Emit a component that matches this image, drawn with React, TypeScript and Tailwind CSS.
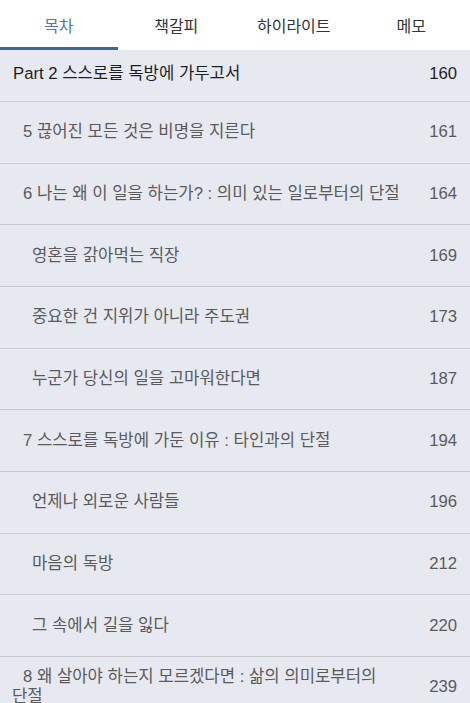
import React from 'react';

type Item = { title: string; page: number; level: 1 | 2 | 3 };

const tabs = ['목차', '책갈피', '하이라이트', '메모'];

const items: Item[] = [
  { title: 'Part 2 스스로를 독방에 가두고서', page: 160, level: 1 },
  { title: '5 끊어진 모든 것은 비명을 지른다', page: 161, level: 2 },
  { title: '6 나는 왜 이 일을 하는가? : 의미 있는 일로부터의 단절', page: 164, level: 2 },
  { title: '영혼을 갉아먹는 직장', page: 169, level: 3 },
  { title: '중요한 건 지위가 아니라 주도권', page: 173, level: 3 },
  { title: '누군가 당신의 일을 고마워한다면', page: 187, level: 3 },
  { title: '7 스스로를 독방에 가둔 이유 : 타인과의 단절', page: 194, level: 2 },
  { title: '언제나 외로운 사람들', page: 196, level: 3 },
  { title: '마음의 독방', page: 212, level: 3 },
  { title: '그 속에서 길을 잃다', page: 220, level: 3 },
  { title: '8 왜 살아야 하는지 모르겠다면 : 삶의 의미로부터의 단절', page: 239, level: 2 },
];

const indent = {
  1: 'indent-[1px] text-[#1f1f1f]',
  2: 'indent-[11px] text-[#5b5b5b]',
  3: 'indent-[20px] text-[#5b5b5b]',
};

export default function App() {
  return (
    <div
      className="w-[470px] h-[703px] overflow-hidden bg-[#e6e9f0]"
      style={{ fontFamily: '"Liberation Sans", "Noto Sans CJK KR", sans-serif' }}
    >
      <div className="flex h-[50px] bg-white">
        {tabs.map((t, i) => (
          <div
            key={t}
            className={`flex-1 flex items-center justify-center text-[16px] ${
              i === 0
                ? 'text-[#4d7aab] border-b-[3px] border-[#3d6794] pt-[7px]'
                : 'text-[#333] pt-[4px]'
            }`}
          >
            {t}
          </div>
        ))}
      </div>
      <ul>
        {items.map((it, i) => (
          <li
            key={i}
            className={`flex items-center border-b border-[#c9cbd0] pl-3 pr-[13px] text-[16.7px] leading-[20px] ${
              i === 0 ? 'h-[52px] pb-[4px]' : i === items.length - 1 ? 'pt-[10px] pb-4' : 'h-[61.67px]'
            }`}
          >
            <span className={`flex-1 break-keep ${indent[it.level]}`}>{it.title}</span>
            <span className={`ml-6 ${it.level === 1 ? 'text-[#1f1f1f]' : 'text-[#5b5b5b]'}`}>
              {it.page}
            </span>
          </li>
        ))}
      </ul>
    </div>
  );
}
